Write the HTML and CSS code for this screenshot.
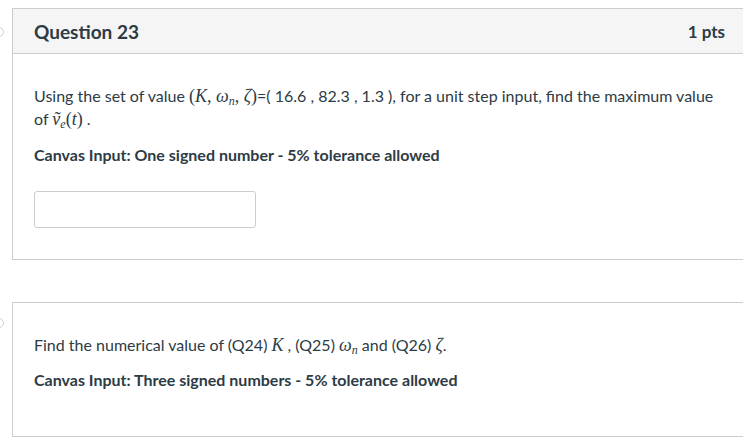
FILE: index.html
```html
<!DOCTYPE html>
<html>
<head>
<meta charset="utf-8">
<link rel="stylesheet" href="styles.css">
</head>
<body>
<div class="page">
  <div class="q">
    <span class="marker m1"></span>
    <div class="card">
      <div class="head">
        <span class="title">Question 23</span>
        <span class="pts">1 pts</span>
      </div>
      <div class="body">
        <p class="text">Using the set of value <span class="m">(<i>K</i>, <i>ω<sub>n</sub></i>, <i>ζ</i>)</span>=( 16.6 , 82.3 , 1.3 ), for a unit step input, find the maximum value of <span class="m"><i>ṽ<sub>e</sub></i>(<i>t</i>)</span> .</p>
        <p class="bold">Canvas Input: One signed number - 5% tolerance allowed</p>
        <div class="input"></div>
      </div>
    </div>
  </div>
  <div class="q">
    <span class="marker m2"></span>
    <div class="card card2">
      <div class="body">
        <p class="text">Find the numerical value of (Q24) <span class="m"><i>K</i></span> , (Q25) <span class="m"><i>ω<sub>n</sub></i></span> and (Q26) <span class="m"><i>ζ</i></span>.</p>
        <p class="bold">Canvas Input: Three signed numbers - 5% tolerance allowed</p>
      </div>
    </div>
  </div>
</div>
</body>
</html>
```
FILE: styles.css
```css
html, body {
  margin: 0;
  padding: 0;
  background: #fff;
  overflow: hidden;
}
body {
  font-family: Lato, "Open Sans", sans-serif;
  color: #2d3b45;
}
.page {
  padding: 8px 0 0 12px;
}
.q {
  position: relative;
}
.marker {
  position: absolute;
  left: -18px;
  width: 8px;
  height: 8px;
  border: 1.5px solid #c9cfd3;
  border-radius: 50%;
}
.m1 { top: 19px; }
.m2 { top: 16px; }
.card {
  width: 735px;
  border: 1px solid #c7cdd1;
  box-sizing: border-box;
  margin-bottom: 42px;
}
.head {
  display: flex;
  justify-content: space-between;
  align-items: center;
  height: 44px;
  background: #f5f5f5;
  border-bottom: 1px solid #c7cdd1;
  padding: 0 21px;
  box-sizing: content-box;
}
.title {
  font-weight: 700;
  font-size: 19px;
}
.pts {
  font-weight: 700;
  font-size: 17px;
}
.body {
  padding: 30px 21px 31px 21px;
}
.card2 .body {
  padding-top: 30px;
  padding-bottom: 45px;
}
p {
  margin: 0;
  font-size: 16px;
  line-height: 23px;
}
.bold {
  font-weight: 700;
  margin-top: 13px;
}
.card2 .bold {
  margin-top: 12px;
}
.m {
  font-family: "Liberation Serif", "DejaVu Serif", serif;
  font-size: 18px;
  line-height: 0;
}
.m i {
  font-style: italic;
}
.m sub {
  font-size: 12px;
  line-height: 0;
  vertical-align: -3px;
}
.input {
  margin-top: 25px;
  width: 222px;
  height: 37px;
  border: 1px solid #c7cdd1;
  border-radius: 3px;
  box-sizing: border-box;
}
```
